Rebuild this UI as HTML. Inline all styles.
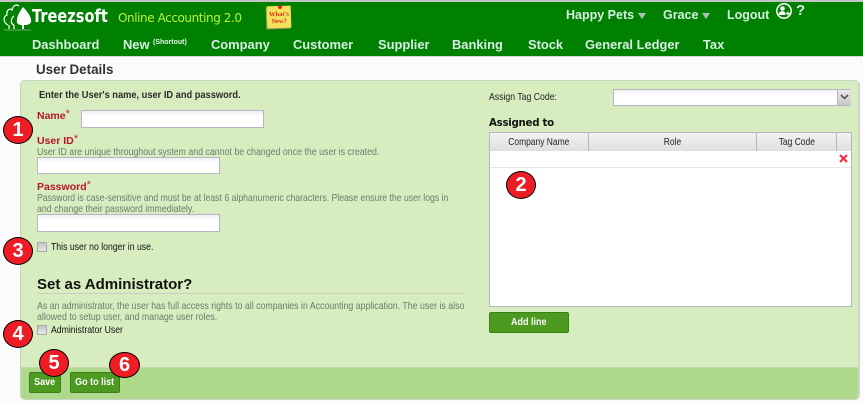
<!DOCTYPE html>
<html><head><meta charset="utf-8"><style>
html,body{margin:0;padding:0}
body{width:863px;height:403px;overflow:hidden;background:#fbfbfb;position:relative;font-family:"Liberation Sans",sans-serif;color:#111}
.a{position:absolute;white-space:nowrap}
.nav{font:bold 12.9px/16px "Liberation Sans",sans-serif;color:#d6efe2;top:37px}
.top{font:bold 12.5px/16px "Liberation Sans",sans-serif;color:#d6efe2;top:7px}
.lab{font:bold 10.5px/13px "Liberation Sans",sans-serif;color:#b5142c}
.lab sup{font-weight:normal;font-size:11px;line-height:0;vertical-align:baseline;position:relative;top:-2px;color:#c8283c}
.hint{font:10.4px/11px "Liberation Sans",sans-serif;color:#6d7a6d;transform:scaleX(.848);transform-origin:0 0}
.inp{position:absolute;background:linear-gradient(#f0f0f0,#fff 5px);border:1px solid #b4b6c8;box-sizing:border-box;height:18px}
.cb{position:absolute;width:8px;height:8px;background:linear-gradient(#c4c4c4,#e8e8e8);border:1px solid #a8a8a8;box-sizing:content-box}
.t{font:10.2px/12px "Liberation Sans",sans-serif;color:#111;transform:scaleX(.853);transform-origin:0 0}
.n{position:absolute;border-radius:50%;background:#ee1c25;border:1px solid #000;box-sizing:border-box;width:30px;height:28px;color:#fff;font:bold 20px/26px "Liberation Sans",sans-serif;text-align:center}
.btn{position:absolute;background:#4c9a20;border:1px solid #3a8018;border-radius:2px;box-sizing:border-box;color:#fff;font:bold 10px/19px "Liberation Sans",sans-serif;text-align:center}
.btn span{display:inline-block;transform:scaleX(.9)}
.th{position:absolute;top:133px;height:18px;font:10.2px/19px "Liberation Sans",sans-serif;text-align:center;color:#222;border-right:1px solid #b4b6c8;box-sizing:border-box}
.th span{display:inline-block;transform:scaleX(.83)}
</style></head><body>
<div class="a" style="left:0;top:0;width:863px;height:2px;background:#c4c4c4"></div>
<div class="a" style="left:0;top:2px;width:863px;height:54px;background:#008000"></div>
<div class="a" style="left:0;top:56px;width:863px;height:1px;background:#d8d8d8"></div>

<svg class="a" style="left:3px;top:3px" width="30" height="28" viewBox="0 0 30 28" fill="none">
<path d="M5 22 C0 20 0 13 4 12 C3 7 7 5 9 7 C10 2 14 1 16 3" stroke="#fff" stroke-width="1.2"/>
<path d="M6 22 V26 M11 13 C8 15 7 21 11 22 M11 22 V26" stroke="#fff" stroke-width="1.2"/>
<path d="M20 4 C25 9 29 15 28 19 C27 22 23 22 21 22 V26 H19 V22 C16 22 13 21 14 17 C14 13 17 8 20 4Z" fill="#fff"/>
<path d="M1 27 H28" stroke="#8fc08f" stroke-width=".8"/>
</svg>
<div class="a" style="left:32px;top:6px;font:bold 18px/22px 'DejaVu Sans',sans-serif;color:#fff;transform:scaleX(.81);transform-origin:0 0">Treezsoft</div>
<div class="a" style="left:118px;top:10px;font:12px/17px 'DejaVu Sans',sans-serif;color:#b9f23a;letter-spacing:-.42px">Online Accounting 2.0</div>
<div class="a" style="left:267px;top:6px;width:24px;height:22px;background:#f5e15c;box-shadow:-1px 1px 0 #9a9a60;transform:rotate(-2deg);font:bold 6.5px/7px 'Liberation Serif',serif;color:#d8331e;text-align:center;padding-top:5px;box-sizing:border-box">What's<br>New?</div>
<div class="a" style="left:278px;top:5px;width:4px;height:4px;border-radius:50%;background:#d9222a"></div>

<div class="a top" style="left:566px">Happy Pets</div>
<div class="a" style="left:638px;top:13px;border-left:4px solid transparent;border-right:4px solid transparent;border-top:6px solid #a9c4b2"></div>
<div class="a top" style="left:663px">Grace</div>
<div class="a" style="left:702px;top:13px;border-left:4px solid transparent;border-right:4px solid transparent;border-top:6px solid #a9c4b2"></div>
<div class="a top" style="left:727px">Logout</div>
<svg class="a" style="left:775px;top:2px" width="18" height="18" viewBox="0 0 18 18">
<circle cx="9" cy="9" r="7.2" fill="#008000" stroke="#fff" stroke-width="1.5"/>
<circle cx="7.5" cy="6.5" r="2.3" fill="#fff"/>
<path d="M3.5 13 C3.5 10 5.5 9.3 7.5 9.3 C9 9.3 10 10 10.5 11 V13Z" fill="#fff"/>
<path d="M11 11.5 H15 M13 9.5 V13.5" stroke="#fff" stroke-width="1.2"/>
</svg>
<div class="a" style="left:796px;top:2px;font:bold 15px/17px 'Liberation Sans',sans-serif;color:#d6efe2">?</div>

<div class="a nav" style="left:32px">Dashboard</div>
<div class="a nav" style="left:123px">New</div>
<div class="a" style="left:153px;top:39px;font:bold 7px/8px 'Liberation Sans',sans-serif;color:#e6f5ea">(Shortout)</div>
<div class="a nav" style="left:211px">Company</div>
<div class="a nav" style="left:293px">Customer</div>
<div class="a nav" style="left:378px">Supplier</div>
<div class="a nav" style="left:452px">Banking</div>
<div class="a nav" style="left:528px">Stock</div>
<div class="a nav" style="left:585px">General Ledger</div>
<div class="a nav" style="left:703px">Tax</div>

<div class="a" style="left:36px;top:62px;font:bold 13.4px/16px 'Liberation Sans',sans-serif;color:#333">User Details</div>

<div class="a" style="left:20px;top:80px;width:840px;height:320px;background:#d7edc0;border:1px solid #c8d4c0;border-right:2px solid #cfd4cc;border-radius:5px;box-sizing:border-box"></div>
<div class="a" style="left:21px;top:367px;width:837px;height:32px;background:#afd98a;border-top:1px solid #c4d4b4;box-sizing:border-box;border-radius:0 0 4px 4px"></div>

<div class="a" style="left:39px;top:90px;font:bold 9.7px/12px 'Liberation Sans',sans-serif;color:#2b2b2b;transform:scaleX(.957);transform-origin:0 0">Enter the User's name, user ID and password.</div>

<div class="a lab" style="left:37px;top:110px">Name<sup>*</sup></div>
<div class="inp" style="left:81px;top:110px;width:183px"></div>

<div class="a lab" style="left:37px;top:135px">User ID<sup>*</sup></div>
<div class="a hint" style="left:37px;top:147px">User ID are unique throughout system and cannot be changed once the user is created.</div>
<div class="inp" style="left:37px;top:157px;width:183px;height:17px"></div>

<div class="a lab" style="left:37px;top:181px">Password<sup>*</sup></div>
<div class="a hint" style="left:37px;top:193px;transform:scaleX(.836)">Password is case-sensitive and must be at least 6 alphanumeric characters. Please ensure the user logs in</div>
<div class="a hint" style="left:37px;top:204px">and change their password immediately.</div>
<div class="inp" style="left:37px;top:214px;width:183px"></div>

<div class="cb" style="left:37px;top:242px"></div>
<div class="a t" style="left:51px;top:242px">This user no longer in use.</div>

<div class="a" style="left:37px;top:276px;font:bold 15px/18px 'Liberation Sans',sans-serif;color:#111">Set as Administrator?</div>
<div class="a" style="left:37px;top:293px;width:428px;height:1px;background:#c6cfc0"></div>
<div class="a hint" style="left:37px;top:301px;transform:scaleX(.845)">As an administrator, the user has full access rights to all companies in Accounting application. The user is also</div>
<div class="a hint" style="left:37px;top:312px">allowed to setup user, and manage user roles.</div>
<div class="cb" style="left:37px;top:325px"></div>
<div class="a t" style="left:51px;top:325px">Administrator User</div>

<div class="btn" style="left:29px;top:372px;width:32px;height:21px"><span>Save</span></div>
<div class="btn" style="left:70px;top:372px;width:50px;height:21px"><span>Go to list</span></div>

<div class="a t" style="left:489px;top:92px;color:#222">Assign Tag Code:</div>
<div class="inp" style="left:613px;top:89px;width:238px;height:17px"></div>
<div class="a" style="left:837px;top:90px;width:14px;height:15px;background:linear-gradient(#e8e8e8,#c8c8c8);border-left:1px solid #b4b6c8;box-sizing:border-box"></div>
<svg class="a" style="left:840px;top:94px" width="9" height="6"><path d="M1 1 L4.5 4.5 L8 1" fill="none" stroke="#555" stroke-width="1.6"/></svg>

<div class="a" style="left:489px;top:116px;font:bold 11px/14px 'DejaVu Sans',sans-serif;color:#111;letter-spacing:-.3px;transform:scaleX(.93);transform-origin:0 0">Assigned to</div>
<div class="a" style="left:489px;top:132px;width:363px;height:175px;background:#fff;border:1px solid #b4b6c8;box-sizing:border-box"></div>
<div class="a" style="left:490px;top:133px;width:361px;height:18px;background:linear-gradient(#f2f2f2,#dedfe0)"></div>
<div class="th" style="left:490px;width:99px"><span>Company Name</span></div>
<div class="th" style="left:589px;width:168px"><span>Role</span></div>
<div class="th" style="left:757px;width:80px"><span>Tag Code</span></div>
<div class="a" style="left:490px;top:167px;width:361px;height:1px;background:#e6e6e6"></div>
<svg class="a" style="left:839px;top:154px" width="9" height="9"><path d="M1 1 L8 8 M8 1 L1 8" stroke="#ee3344" stroke-width="2.2"/></svg>

<div class="btn" style="left:489px;top:312px;width:80px;height:21px"><span>Add line</span></div>

<div class="n" style="left:3px;top:116px">1</div>
<div class="n" style="left:506px;top:171px">2</div>
<div class="n" style="left:3px;top:237px">3</div>
<div class="n" style="left:3px;top:320px">4</div>
<div class="n" style="left:39px;top:349px">5</div>
<div class="n" style="left:109px;top:352px;width:31px;height:26px;line-height:24px">6</div>
</body></html>
